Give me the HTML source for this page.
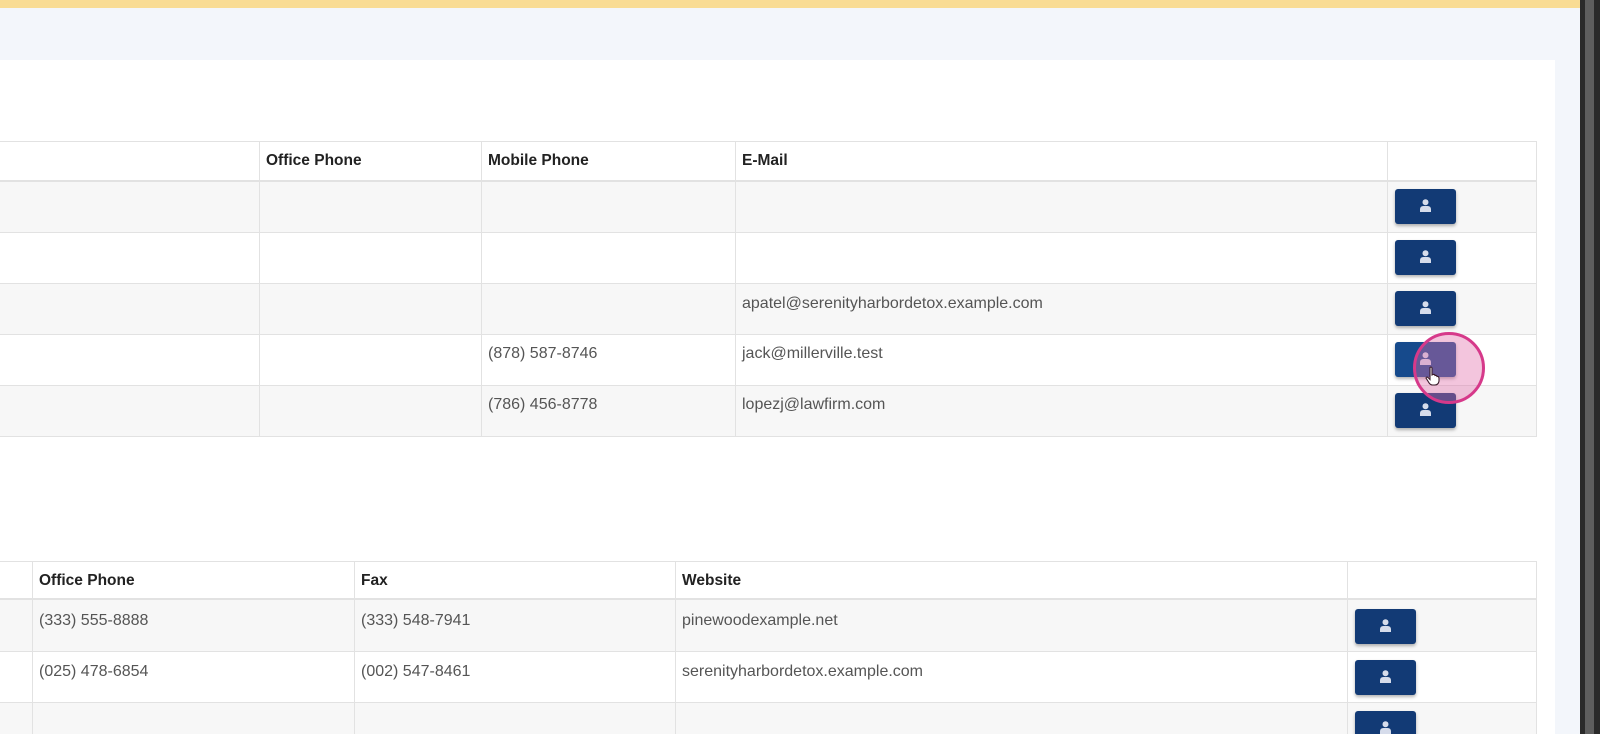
<!DOCTYPE html>
<html style="overflow:hidden"><head><meta charset="utf-8"><style>
*{margin:0;padding:0;box-sizing:border-box}
html,body{width:1600px;height:734px;overflow:hidden}
body{background:#f3f6fb;font-family:"Liberation Sans",sans-serif;position:relative}
.abs{position:absolute}
.t{position:absolute;font-size:16px;color:#555;white-space:nowrap;line-height:18px}
.h{font-weight:bold;color:#222;font-size:15.5px}
.btn{position:absolute;width:61px;height:35px;background:#123a75;border-radius:3px;box-shadow:0 2px 3px rgba(0,0,0,.3)}
.btn svg{position:absolute;left:25px;top:10px}
</style></head><body>
<div class="abs" style="left:0;top:0;width:1580px;height:8px;background:#f9dc94"></div>
<div class="abs" style="left:1580px;top:0;width:20px;height:734px;background:#2a2a2a"></div>
<div class="abs" style="left:1585px;top:0;width:9px;height:734px;background:#5e5e5e"></div>
<div class="abs" style="left:0;top:60px;width:1555px;height:674px;background:#fff"></div>

<!-- table 1 -->
<div class="abs" style="left:0;top:182px;width:1536px;height:51px;background:#f7f7f7"></div>
<div class="abs" style="left:0;top:283px;width:1536px;height:51px;background:#f7f7f7"></div>
<div class="abs" style="left:0;top:385px;width:1536px;height:51px;background:#f7f7f7"></div>
<div class="abs" style="left:0;top:141px;width:1537px;height:296px;border:1px solid #e2e2e2;border-left:none"></div>
<div class="abs" style="left:0;top:180px;width:1536px;height:2px;background:#e2e2e2"></div>
<div class="abs" style="left:0;top:232px;width:1536px;height:1px;background:#e2e2e2"></div>
<div class="abs" style="left:0;top:283px;width:1536px;height:1px;background:#e2e2e2"></div>
<div class="abs" style="left:0;top:334px;width:1536px;height:1px;background:#e2e2e2"></div>
<div class="abs" style="left:0;top:385px;width:1536px;height:1px;background:#e2e2e2"></div>
<div class="abs" style="left:259px;top:141px;width:1px;height:295px;background:#e2e2e2"></div>
<div class="abs" style="left:481px;top:141px;width:1px;height:295px;background:#e2e2e2"></div>
<div class="abs" style="left:735px;top:141px;width:1px;height:295px;background:#e2e2e2"></div>
<div class="abs" style="left:1387px;top:141px;width:1px;height:295px;background:#e2e2e2"></div>
<div class="t h" style="left:266px;top:152px">Office Phone</div>
<div class="t h" style="left:488px;top:152px">Mobile Phone</div>
<div class="t h" style="left:742px;top:152px">E-Mail</div>
<div class="t" style="left:742px;top:295px">apatel@serenityharbordetox.example.com</div>
<div class="t" style="left:488px;top:345px">(878) 587-8746</div>
<div class="t" style="left:742px;top:345px">jack@millerville.test</div>
<div class="t" style="left:488px;top:396px">(786) 456-8778</div>
<div class="t" style="left:742px;top:396px">lopezj@lawfirm.com</div>

<!-- table 2 -->
<div class="abs" style="left:0;top:600px;width:1536px;height:52px;background:#f7f7f7"></div>
<div class="abs" style="left:0;top:703px;width:1536px;height:31px;background:#f7f7f7"></div>
<div class="abs" style="left:0;top:561px;width:1537px;height:173px;border-top:1px solid #e2e2e2;border-right:1px solid #e2e2e2"></div>
<div class="abs" style="left:0;top:598px;width:1536px;height:2px;background:#e2e2e2"></div>
<div class="abs" style="left:0;top:651px;width:1536px;height:1px;background:#e2e2e2"></div>
<div class="abs" style="left:0;top:702px;width:1536px;height:1px;background:#e2e2e2"></div>
<div class="abs" style="left:32px;top:561px;width:1px;height:173px;background:#e2e2e2"></div>
<div class="abs" style="left:354px;top:561px;width:1px;height:173px;background:#e2e2e2"></div>
<div class="abs" style="left:675px;top:561px;width:1px;height:173px;background:#e2e2e2"></div>
<div class="abs" style="left:1347px;top:561px;width:1px;height:173px;background:#e2e2e2"></div>
<div class="t h" style="left:39px;top:572px">Office Phone</div>
<div class="t h" style="left:361px;top:572px">Fax</div>
<div class="t h" style="left:682px;top:572px">Website</div>
<div class="t" style="left:39px;top:612px">(333) 555-8888</div>
<div class="t" style="left:361px;top:612px">(333) 548-7941</div>
<div class="t" style="left:682px;top:612px">pinewoodexample.net</div>
<div class="t" style="left:39px;top:663px">(025) 478-6854</div>
<div class="t" style="left:361px;top:663px">(002) 547-8461</div>
<div class="t" style="left:682px;top:663px">serenityharbordetox.example.com</div>

<!-- buttons -->
<div class="btn" style="left:1395px;top:189px"><svg width="11" height="13" viewBox="0 0 11 13"><circle cx="5.5" cy="3.3" r="3" fill="#d6dceb"/><path d="M0 13V10.5Q0 7 3.5 7H7.5Q11 7 11 10.5V13Z" fill="#d6dceb"/></svg></div>
<div class="btn" style="left:1395px;top:240px"><svg width="11" height="13" viewBox="0 0 11 13"><circle cx="5.5" cy="3.3" r="3" fill="#d6dceb"/><path d="M0 13V10.5Q0 7 3.5 7H7.5Q11 7 11 10.5V13Z" fill="#d6dceb"/></svg></div>
<div class="btn" style="left:1395px;top:291px"><svg width="11" height="13" viewBox="0 0 11 13"><circle cx="5.5" cy="3.3" r="3" fill="#d6dceb"/><path d="M0 13V10.5Q0 7 3.5 7H7.5Q11 7 11 10.5V13Z" fill="#d6dceb"/></svg></div>
<div class="btn" style="left:1395px;top:342px;background:#164a8c"><svg width="11" height="13" viewBox="0 0 11 13"><circle cx="5.5" cy="3.3" r="3" fill="#d6dceb"/><path d="M0 13V10.5Q0 7 3.5 7H7.5Q11 7 11 10.5V13Z" fill="#d6dceb"/></svg></div>
<div class="btn" style="left:1395px;top:393px"><svg width="11" height="13" viewBox="0 0 11 13"><circle cx="5.5" cy="3.3" r="3" fill="#d6dceb"/><path d="M0 13V10.5Q0 7 3.5 7H7.5Q11 7 11 10.5V13Z" fill="#d6dceb"/></svg></div>
<div class="btn" style="left:1355px;top:609px"><svg width="11" height="13" viewBox="0 0 11 13"><circle cx="5.5" cy="3.3" r="3" fill="#d6dceb"/><path d="M0 13V10.5Q0 7 3.5 7H7.5Q11 7 11 10.5V13Z" fill="#d6dceb"/></svg></div>
<div class="btn" style="left:1355px;top:660px"><svg width="11" height="13" viewBox="0 0 11 13"><circle cx="5.5" cy="3.3" r="3" fill="#d6dceb"/><path d="M0 13V10.5Q0 7 3.5 7H7.5Q11 7 11 10.5V13Z" fill="#d6dceb"/></svg></div>
<div class="btn" style="left:1355px;top:711px"><svg width="11" height="13" viewBox="0 0 11 13"><circle cx="5.5" cy="3.3" r="3" fill="#d6dceb"/><path d="M0 13V10.5Q0 7 3.5 7H7.5Q11 7 11 10.5V13Z" fill="#d6dceb"/></svg></div>

<!-- click indicator -->
<div class="abs" style="left:1413px;top:332px;width:72px;height:72px;border-radius:50%;border:3px solid #d6398a;background:rgba(225,110,170,0.4)"></div>
<svg class="abs" style="left:1425px;top:366px" width="16" height="20" viewBox="0 0 16 20"><path d="M5 1.5Q6.5 0.5 7 2V9L8 8.5Q9.5 8 10 9.5Q11.5 9 12 10.5Q13.5 10 14 12V15Q13.5 19 9.5 19H7.5Q5 19 3.5 16L1 12Q1.5 10.5 3 11.5L5 13.5Z" fill="#fff" stroke="#3a1b2a" stroke-width="1.1"/></svg>
</body></html>
